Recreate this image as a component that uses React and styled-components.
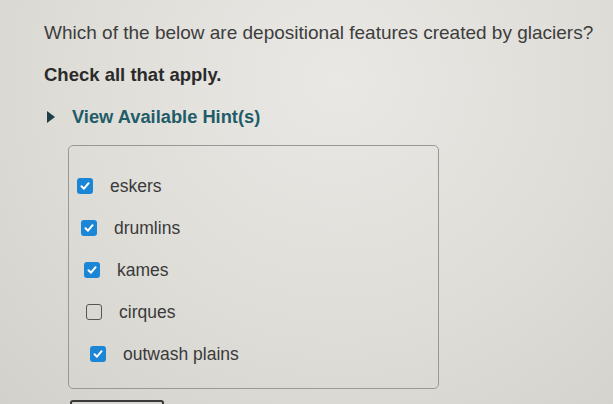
import React from "react";
import styled, { createGlobalStyle } from "styled-components";

const GlobalStyle = createGlobalStyle`
  html, body {
    margin: 0;
    padding: 0;
    height: 100%;
    overflow: hidden;
  }
  body {
    font-family: "Liberation Sans", Arial, sans-serif;
    background: radial-gradient(ellipse at 55% 20%, #e9e8e4 0%, #dfddd8 55%, #d3d1cc 100%);
  }
`;

const Page = styled.div`
  width: 613px;
  height: 404px;
  padding: 22px 0 0 44px;
  box-sizing: border-box;
  overflow: hidden;
`;

const Question = styled.div`
  font-size: 19px;
  line-height: 22px;
  color: #3d3d3d;
`;

const Instruction = styled.div`
  margin-top: 20px;
  font-size: 18.5px;
  line-height: 22px;
  font-weight: bold;
  color: #2a2a2a;
`;

const HintToggle = styled.div`
  display: flex;
  align-items: center;
  margin-top: 20px;
  padding-left: 3px;
  gap: 17px;
  font-size: 18.3px;
  line-height: 22px;
  font-weight: bold;
  color: #1f5c68;
`;

const Triangle = styled.span`
  width: 0;
  height: 0;
  border-top: 6px solid transparent;
  border-bottom: 6px solid transparent;
  border-left: 8px solid #1d3f48;
`;

const OptionsBox = styled.div`
  margin: 17px 0 0 24px;
  width: 371px;
  height: 244px;
  box-sizing: border-box;
  border: 1.5px solid #9a9894;
  border-radius: 5px;
  padding: 30px 0 0 0;
  display: flex;
  flex-direction: column;
  gap: 22px;
`;

const Option = styled.label`
  display: flex;
  align-items: center;
  gap: 17px;
  padding-left: ${(p) => p.$indent}px;
  font-size: 17.5px;
  line-height: 20px;
  color: #3a3a3a;
`;

const Box = styled.span`
  width: 16px;
  height: 16px;
  box-sizing: border-box;
  border-radius: 3px;
  display: flex;
  align-items: center;
  justify-content: center;
  background: ${(p) => (p.$checked ? "#1b86d6" : "transparent")};
  border: ${(p) => (p.$checked ? "none" : "1.8px solid #555")};
`;

const SubmitButton = styled.div`
  margin: 11px 0 0 26px;
  width: 90px;
  height: 30px;
  border: 2px solid #3a3a3a;
  border-radius: 3px;
`;

const options = [
  { label: "eskers", checked: true, indent: 8 },
  { label: "drumlins", checked: true, indent: 12 },
  { label: "kames", checked: true, indent: 15 },
  { label: "cirques", checked: false, indent: 17 },
  { label: "outwash plains", checked: true, indent: 21 },
];

function Check({ checked }) {
  return (
    <Box $checked={checked}>
      {checked && (
        <svg width="12" height="12" viewBox="0 0 12 12">
          <path
            d="M2.5 6.3 L5 8.7 L9.6 3.2"
            fill="none"
            stroke="#fff"
            strokeWidth="2"
            strokeLinecap="round"
            strokeLinejoin="round"
          />
        </svg>
      )}
    </Box>
  );
}

export default function App() {
  return (
    <>
      <GlobalStyle />
      <Page>
        <Question>Which of the below are depositional features created by glaciers?</Question>
        <Instruction>Check all that apply.</Instruction>
        <HintToggle>
          <Triangle />
          View Available Hint(s)
        </HintToggle>
        <OptionsBox>
          {options.map((o) => (
            <Option key={o.label} $indent={o.indent}>
              <Check checked={o.checked} />
              {o.label}
            </Option>
          ))}
        </OptionsBox>
        <SubmitButton />
      </Page>
    </>
  );
}
